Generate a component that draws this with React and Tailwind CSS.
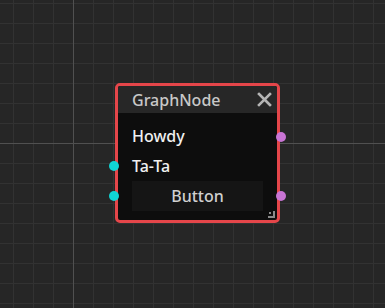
import React from "react";

function Port({ side, top, color }) {
  const pos = side === "left" ? "left-[-6px]" : "right-[-6px]";
  return (
    <div
      className={`absolute ${pos} w-[10px] h-[10px] rounded-full ${color}`}
      style={{ top }}
    />
  );
}

export default function App() {
  return (
    <div
      className="relative w-[385px] h-[308px] overflow-hidden bg-[#262626] font-['Noto_Sans',sans-serif]"
      style={{
        backgroundImage:
          "linear-gradient(to right, transparent 73px, #505050 73px, #505050 74px, transparent 74px), linear-gradient(to bottom, transparent 143px, #505050 143px, #505050 144px, transparent 144px), linear-gradient(to right, #323232 1px, transparent 1px), linear-gradient(to bottom, #323232 1px, transparent 1px)",
        backgroundSize: "100% 100%, 100% 100%, 20px 20px, 20px 20px",
        backgroundPosition: "0 0, 0 0, 13px 3px, 0 3px",
      }}
    >
      {/* graph node, placed on the canvas */}
      <div className="absolute left-[115px] top-[83px] w-[165px] h-[140px]">
        <div className="w-full h-full flex flex-col rounded-[5px] border-[3px] border-[#e5464a] bg-[#0d0d0d] overflow-hidden">
          <div className="h-[27px] shrink-0 flex items-center justify-between pl-[14px] pr-[5px] bg-[#272727]">
            <span className="text-[16px] font-medium text-[#c8c8c8] leading-none">GraphNode</span>
            <svg width="15" height="15" viewBox="0 0 15 15">
              <path d="M2 2 L13 13 M13 2 L2 13" stroke="#b4b4b4" strokeWidth="2.6" strokeLinecap="square" />
            </svg>
          </div>
          <div className="flex-1 flex flex-col pt-[8px] pl-[14px] pr-[14px] relative">
            <div className="h-[30px] flex items-center text-[16px] font-medium text-[#f0f0f0]">Howdy</div>
            <div className="h-[30px] flex items-center text-[16px] font-medium text-[#f0f0f0]">Ta-Ta</div>
            <div className="h-[30px] flex items-center justify-center bg-[#151515] text-[16px] font-medium text-[#d0d0d0]">
              Button
            </div>
            <svg className="absolute right-[1px] bottom-[1px]" width="8" height="8" viewBox="0 0 8 8">
              <path d="M6 0 V6 H0" stroke="#8a8a8a" strokeWidth="2" fill="none" />
              <rect x="1" y="1" width="2" height="2" fill="#8a8a8a" />
            </svg>
          </div>
        </div>
        <Port side="right" top="49px" color="bg-[#c874d4]" />
        <Port side="left" top="78px" color="bg-[#10d4d4]" />
        <Port side="left" top="108px" color="bg-[#10d4d4]" />
        <Port side="right" top="108px" color="bg-[#c874d4]" />
      </div>
    </div>
  );
}
